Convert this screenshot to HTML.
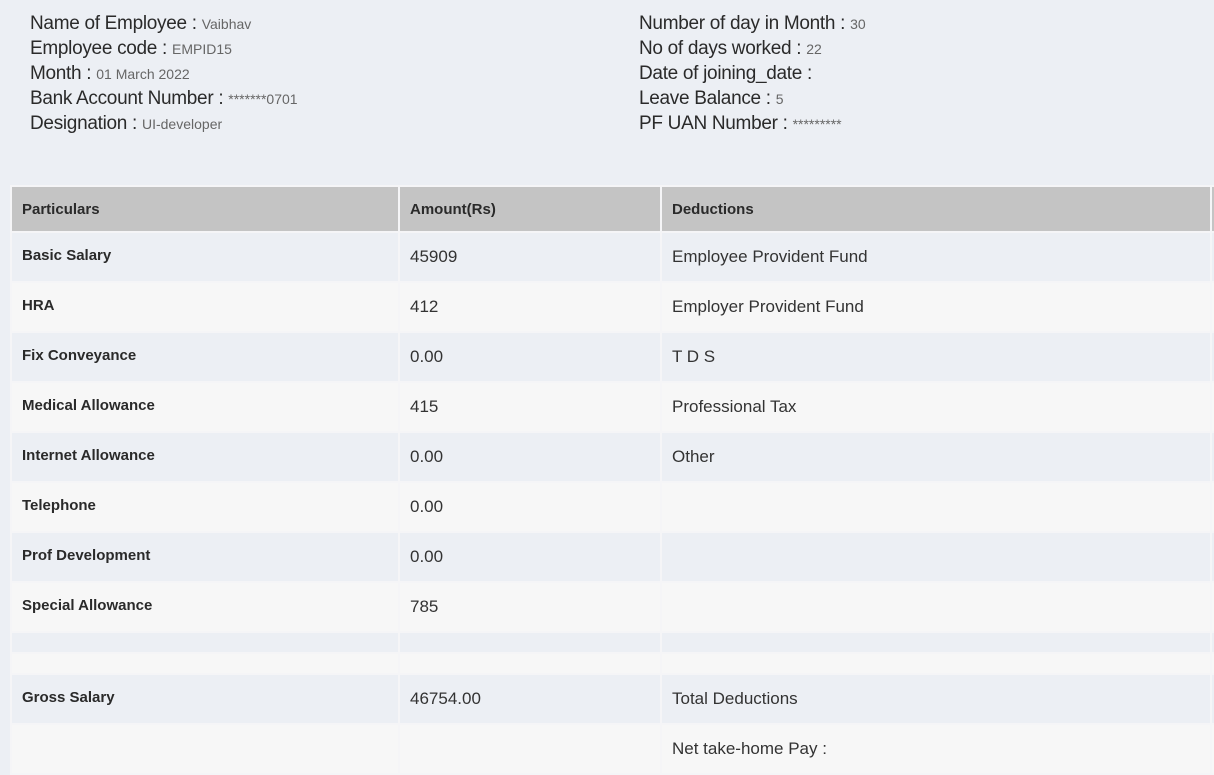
<!DOCTYPE html>
<html><head><style>
body{margin:0;background:#eceff4;font-family:"Liberation Sans",sans-serif;color:#333;width:1214px;height:766px;overflow:hidden;position:relative}
.info{position:absolute;top:11px;font-size:19px;line-height:25px;color:#2a2a2a;letter-spacing:-0.3px}
.info div{height:25px;white-space:nowrap}
.info span{font-size:14px;color:#666;letter-spacing:0;line-height:0}
table{position:absolute;left:10px;top:185px;border-collapse:collapse;width:1210px;table-layout:fixed}
td,th{border:2px solid #f5f5f7;padding:0 10px;text-align:left;font-size:17px;color:#333}
th{background:#c4c4c4;height:44px;font-size:15px;font-weight:bold;color:#2a2a2a}
td{height:48px}
td:first-child{font-weight:bold;font-size:15px;vertical-align:top;padding-top:14px;height:34px;color:#2a2a2a}
tr:nth-child(even) td{background:#eceff4}
tr:nth-child(odd) td{background:#f7f7f7}
tr.sm td{height:19px;padding-top:0}
</style></head><body>
<div class="info" style="left:30px"><div>Name of Employee : <span>Vaibhav</span></div><div>Employee code : <span>EMPID15</span></div><div>Month : <span>01 March 2022</span></div><div>Bank Account Number : <span>*******0701</span></div><div>Designation : <span>UI-developer</span></div></div>
<div class="info" style="left:639px"><div>Number of day in Month : <span>30</span></div><div>No of days worked : <span>22</span></div><div>Date of joining_date : </div><div>Leave Balance : <span>5</span></div><div>PF UAN Number : <span>*********</span></div></div>
<table>
<colgroup><col style="width:388px"><col style="width:262px"><col style="width:550px"><col style="width:10px"></colgroup>
<tr><th>Particulars</th><th>Amount(Rs)</th><th>Deductions</th><th></th></tr>
<tr><td>Basic Salary</td><td>45909</td><td>Employee Provident Fund</td><td></td></tr>
<tr><td>HRA</td><td>412</td><td>Employer Provident Fund</td><td></td></tr>
<tr><td>Fix Conveyance</td><td>0.00</td><td>T D S</td><td></td></tr>
<tr><td>Medical Allowance</td><td>415</td><td>Professional Tax</td><td></td></tr>
<tr><td>Internet Allowance</td><td>0.00</td><td>Other</td><td></td></tr>
<tr><td>Telephone</td><td>0.00</td><td></td><td></td></tr>
<tr><td>Prof Development</td><td>0.00</td><td></td><td></td></tr>
<tr><td>Special Allowance</td><td>785</td><td></td><td></td></tr>
<tr class="sm"><td></td><td></td><td></td><td></td></tr>
<tr class="sm"><td></td><td></td><td></td><td></td></tr>
<tr><td>Gross Salary</td><td>46754.00</td><td>Total Deductions</td><td></td></tr>
<tr><td></td><td></td><td>Net take-home Pay :</td><td></td></tr>
</table>
</body></html>
